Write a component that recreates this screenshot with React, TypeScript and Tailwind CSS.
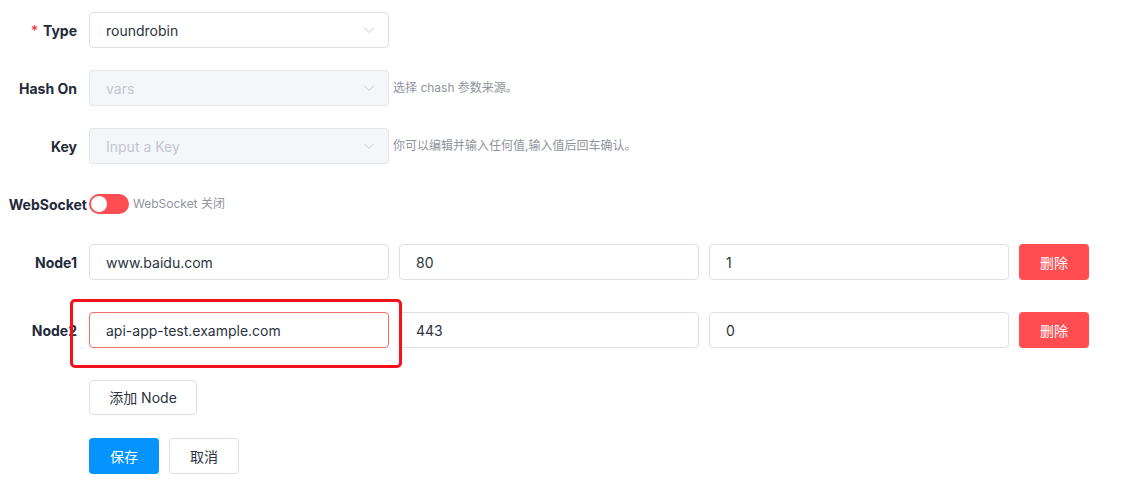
import React from "react";

const font = { fontFamily: 'Inter, "Noto Sans CJK SC", sans-serif' };

const Chevron = () => (
  <svg width="14" height="14" viewBox="0 0 14 14" fill="none" className="absolute right-[12px] top-1/2 -translate-y-1/2">
    <path d="M2.5 5 L7 9.5 L11.5 5" stroke="#c6cad3" strokeWidth="1" strokeLinecap="round" strokeLinejoin="round" />
  </svg>
);

const Label = ({ children, required, tight }: { children: React.ReactNode; required?: boolean; tight?: boolean }) => (
  <div
    className={`w-[89px] shrink-0 flex justify-end items-center whitespace-nowrap text-[14px] font-bold text-[#1f2a3a] ${tight ? "pr-[2px]" : "pr-3"}`}
  >
    {required && <span className="text-[#f5222d] mr-[5px] font-normal">*</span>}
    {children}
  </div>
);

const Select = ({ value, placeholder, disabled }: { value?: string; placeholder?: boolean; disabled?: boolean }) => (
  <div
    className={`relative w-[300px] h-[36px] rounded-[4px] border flex items-center pl-[16px] text-[14px] ${
      disabled ? "bg-[#f5f6f9] border-[#e1e4ec]" : "bg-white border-[#dcdfe6]"
    } ${placeholder ? "text-[#c3c7cf]" : "text-[#2b3340]"}`}
  >
    {value}
    <Chevron />
  </div>
);

const Input = ({ value, error }: { value: string; error?: boolean }) => (
  <div
    className={`w-[300px] h-[36px] rounded-[4px] border bg-white flex items-center pl-[16px] text-[14px] text-[#2b3340] ${
      error ? "border-[#f56c6c]" : "border-[#dcdfe6]"
    }`}
  >
    {value}
  </div>
);

const DeleteBtn = () => (
  <button className="w-[70px] h-[36px] rounded-[4px] bg-[#ff4d51] text-white text-[14px]">删除</button>
);

const NodeRow = ({ name, host, port, weight, error, className }: { name: string; host: string; port: string; weight: string; error?: boolean; className: string }) => (
  <div className={`flex h-[36px] items-center ${className}`}>
    <Label>{name}</Label>
    <div className="flex gap-[10px]">
      <Input value={host} error={error} />
      <Input value={port} />
      <Input value={weight} />
      <DeleteBtn />
    </div>
  </div>
);

export default function App() {
  return (
    <div className="relative w-[1131px] h-[480px] bg-white overflow-hidden" style={font}>
      <div className="flex flex-col pt-[12px]">
        <div className="flex h-[36px]">
          <Label required>Type</Label>
          <Select value="roundrobin" />
        </div>

        <div className="flex h-[36px] mt-[22px] items-center">
          <Label>Hash On</Label>
          <Select value="vars" placeholder disabled />
          <span className="ml-[4px] text-[12px] text-[#8f949c]">选择 chash 参数来源。</span>
        </div>

        <div className="flex h-[36px] mt-[22px] items-center">
          <Label>Key</Label>
          <Select value="Input a Key" placeholder disabled />
          <span className="ml-[4px] text-[12px] text-[#8f949c]">你可以编辑并输入任何值,输入值后回车确认。</span>
        </div>

        <div className="flex h-[36px] mt-[22px] items-center">
          <Label tight>WebSocket</Label>
          <div className="relative w-[40px] h-[20px] rounded-full bg-[#ff4d51]">
            <div className="absolute left-[2px] top-[2px] w-[16px] h-[16px] rounded-full bg-white" />
          </div>
          <span className="ml-[4px] text-[12px] text-[#8f949c]">WebSocket 关闭</span>
        </div>

        <NodeRow className="mt-[22px]" name="Node1" host="www.baidu.com" port="80" weight="1" />
        <NodeRow className="mt-[32px]" name="Node2" host="api-app-test.example.com" port="443" weight="0" error />

        <div className="flex mt-[32px] pl-[89px]">
          <button className="w-[108px] h-[35px] rounded-[4px] border border-[#dcdfe6] bg-white text-[14px] text-[#2b3340]">
            添加 Node
          </button>
        </div>

        <div className="flex mt-[23px] pl-[89px] gap-[10px]">
          <button className="w-[70px] h-[36px] rounded-[4px] bg-[#0593ff] text-white text-[14px]">保存</button>
          <button className="w-[70px] h-[36px] rounded-[4px] border border-[#dcdfe6] bg-white text-[14px] text-[#2b3340]">
            取消
          </button>
        </div>
      </div>

      {/* annotation box around Node2 host */}
      <div className="absolute left-[70px] top-[299px] w-[332px] h-[69px] rounded-[5px] border-[3px] border-[#f5101e] pointer-events-none" />
    </div>
  );
}
